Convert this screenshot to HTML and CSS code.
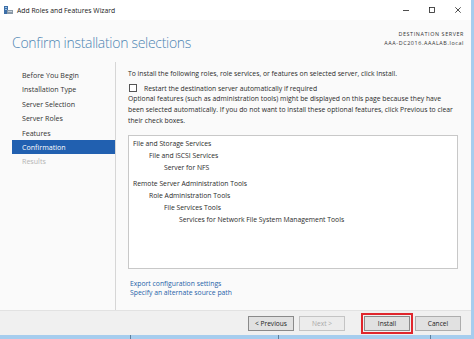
FILE: index.html
```html
<!DOCTYPE html>
<html lang="en">
<head>
  <meta charset="UTF-8">
  <title>Add Roles and Features Wizard</title>
  <link rel="stylesheet" href="styles.css">
</head>
<body>

  <div class="window">
    <!-- 타이틀바 -->
    <div class="titlebar">
      <svg class="app-icon" viewBox="0 0 9 8">
        <rect x="0" y="0" width="4" height="8" fill="#3d6fa8"/>
        <rect x="1" y="1" width="2" height="1" fill="#9cc3e6"/>
        <rect x="1" y="3" width="2" height="1" fill="#9cc3e6"/>
        <rect x="3" y="4" width="6" height="4" fill="#8a9aa8"/>
        <rect x="4" y="5" width="4" height="1" fill="#c9d3dc"/>
      </svg>
      <span class="title">Add Roles and Features Wizard</span>
      <div class="controls">
        <span class="ctrl"><svg viewBox="0 0 6 6"><path d="M0 3.5H6" stroke="#222" stroke-width="0.8"/></svg></span>
        <span class="ctrl"><svg viewBox="0 0 6 6"><rect x="0.5" y="0.5" width="5" height="5" fill="none" stroke="#222" stroke-width="0.8"/></svg></span>
        <span class="ctrl"><svg viewBox="0 0 6 6"><path d="M0.3 0.3L5.7 5.7M5.7 0.3L0.3 5.7" stroke="#222" stroke-width="0.8"/></svg></span>
      </div>
    </div>

    <!-- 헤더 -->
    <div class="header">
      <h1>Confirm installation selections</h1>
      <div class="dest">
        <div>DESTINATION SERVER</div>
        <div>AAA-DC2016.AAALAB.local</div>
      </div>
    </div>

    <div class="main">
      <ul class="nav">
        <li>Before You Begin</li>
        <li>Installation Type</li>
        <li>Server Selection</li>
        <li>Server Roles</li>
        <li>Features</li>
        <li class="active">Confirmation</li>
        <li class="disabled">Results</li>
      </ul>

      <div class="content">
        <p class="intro">To install the following roles, role services, or features on selected server, click Install.</p>
        <label class="check-row"><span class="checkbox"></span>Restart the destination server automatically if required</label>
        <p class="note">Optional features (such as administration tools) might be displayed on this page because they have been selected automatically. If you do not want to install these optional features, click Previous to clear their check boxes.</p>

        <div class="selection">
          <div class="group">
            <div class="lv-0">File and Storage Services</div>
            <div class="lv-1">File and iSCSI Services</div>
            <div class="lv-2">Server for NFS</div>
          </div>
          <div class="group">
            <div class="lv-0">Remote Server Administration Tools</div>
            <div class="lv-1">Role Administration Tools</div>
            <div class="lv-2">File Services Tools</div>
            <div class="lv-3">Services for Network File System Management Tools</div>
          </div>
        </div>

        <div class="links">
          <a href="#">Export configuration settings</a>
          <a href="#">Specify an alternate source path</a>
        </div>
      </div>
    </div>

    <!-- 하단 버튼 -->
    <div class="footer">
      <button class="btn btn-prev">&lt; Previous</button>
      <button class="btn btn-next" disabled>Next &gt;</button>
      <div class="highlight"><button class="btn">Install</button></div>
      <button class="btn btn-cancel">Cancel</button>
    </div>
  </div>

  <!-- 뒤쪽 창 가장자리 -->
  <div class="backdrop">
    <span class="tick t1"></span>
    <span class="tick t2"></span>
    <span class="tick t3"></span>
  </div>

</body>
</html>
```

FILE: styles.css
```css
* {
  box-sizing: border-box;
}

html,
body {
  margin: 0;
}

body {
  width: 474px;
  height: 339px;
  overflow: hidden;
  background-color: #a6cdee;
  font-family: "Open Sans", "Noto Sans", sans-serif;
  color: #2b2b2b;
}

.window {
  width: 471px;
  height: 335px;
  background-color: #fafafa;
  display: flex;
  flex-direction: column;
}

/* 타이틀바 */
.titlebar {
  height: 20px;
  background-color: #fff;
  display: flex;
  align-items: center;
  padding-left: 4px;
}

.app-icon {
  width: 9px;
  height: 8px;
  margin-right: 4px;
}

.titlebar .title {
  font-size: 6.8px;
  color: #1a1a1a;
}

.controls {
  margin-left: auto;
  display: flex;
}

.ctrl {
  width: 26px;
  height: 20px;
  display: flex;
  align-items: center;
  justify-content: center;
}

.ctrl svg {
  width: 6px;
  height: 6px;
}

/* 헤더 */
.header {
  height: 42px;
  display: flex;
  justify-content: space-between;
  padding: 0 7px 0 12px;
}

.header h1 {
  margin: 13px 0 0;
  font-size: 14px;
  line-height: 20px;
  font-weight: 300;
  letter-spacing: -0.3px;
  color: #4d85b3;
}

/* 대문자/좁은 글꼴 폭 맞추기 위해 자간 추가 */
.dest {
  padding-top: 10px;
  text-align: right;
  font-size: 5.4px;
  line-height: 9px;
  letter-spacing: 0.6px;
  color: #333;
}

/* 본문 */
.main {
  flex: 1;
  display: flex;
}

.nav {
  width: 116px;
  margin: 0;
  padding: 6px 0 0 12px;
  list-style: none;
  border-right: 1px solid #d6d6d6;
  font-size: 7.1px;
}

.nav li {
  height: 14.4px;
  line-height: 14.4px;
  padding-left: 10px;
  color: #333;
}

.nav li.active {
  background-color: #2160b0;
  color: #fff;
}

.nav li.disabled {
  color: #b4b4b4;
}

.content {
  flex: 1;
  padding: 6px 13px 0 12px;
  font-size: 6.8px;
  line-height: 11px;
}

.content p {
  margin: 0;
}

.check-row {
  display: flex;
  align-items: center;
  height: 10px;
  margin-top: 4px;
}

.checkbox {
  width: 8px;
  height: 8px;
  margin: 0 7px 0 1px;
  border: 1px solid #555;
  background-color: #fff;
}

.selection {
  height: 134px;
  margin-top: 9px;
  padding: 2px 4px;
  background-color: #fff;
  border: 1px solid #c8c8c8;
  line-height: 12px;
}

.group + .group {
  margin-top: 4px;
}

.lv-1 {
  padding-left: 16px;
}

.lv-2 {
  padding-left: 31px;
}

.lv-3 {
  padding-left: 46px;
}

.links {
  margin-top: 11px;
  padding-left: 2px;
  display: flex;
  flex-direction: column;
  line-height: 8.5px;
}

.links a {
  color: #1f63a8;
  text-decoration: none;
}

/* 하단 */
.footer {
  height: 25px;
  background-color: #f0f0f0;
  border-top: 1px solid #e2e2e2;
  display: flex;
  align-items: center;
  justify-content: flex-end;
  padding-right: 10px;
}

.btn {
  width: 46px;
  height: 15px;
  padding: 0;
  font-family: inherit;
  font-size: 6.6px;
  color: #222;
  background-color: #e1e1e1;
  border: 1px solid #8a8a8a;
}

.btn-prev {
  margin-right: 5px;
}

.btn-next {
  margin-right: 16px;
  color: #a8a8a8;
  background-color: #ececec;
  border-color: #c4c4c4;
}

.btn-cancel {
  margin-left: 2px;
  border-color: #adadad;
}

.highlight {
  display: flex;
  padding: 1px;
  border: 2px solid #e0262c;
}

/* 뒤쪽 창 */
.backdrop {
  position: relative;
  height: 4px;
}

.tick {
  position: absolute;
  top: 0;
  width: 1px;
  height: 4px;
  background-color: #5d7f9c;
}

.t1 { left: 130px; }
.t2 { left: 278px; }
.t3 { left: 430px; }
```
